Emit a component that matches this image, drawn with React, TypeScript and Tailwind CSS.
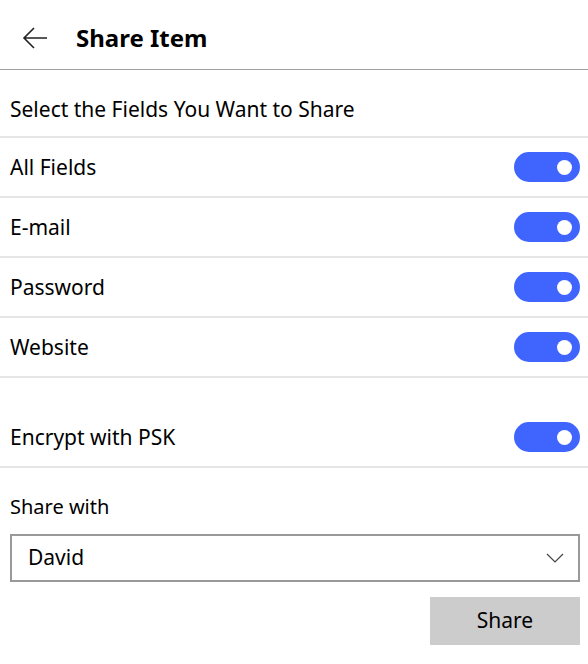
import { useState } from "react"

const fieldNames = ["All Fields", "E-mail", "Password", "Website"]

function Toggle({ on, onChange }: { on: boolean; onChange: () => void }) {
  return (
    <button
      onClick={onChange}
      className={`relative w-[66px] h-[30px] rounded-full ${on ? "bg-[#4065ff]" : "bg-gray-300"}`}
    >
      <span
        className={`absolute top-[7.5px] w-[15px] h-[15px] rounded-full bg-white ${on ? "right-[8px]" : "left-[8px]"}`}
      />
    </button>
  )
}

function Row({ label, on, onChange }: { label: string; on: boolean; onChange: () => void }) {
  return (
    <div className="flex items-center justify-between h-[60px] pl-[10px] pr-[8px] border-b-2 border-[#e6e6e6]">
      <span className="text-[21px] mt-[2px]">{label}</span>
      <Toggle on={on} onChange={onChange} />
    </div>
  )
}

export default function App() {
  const [fields, setFields] = useState([true, true, true, true])
  const [encrypt, setEncrypt] = useState(true)

  return (
    <div className="w-[588px] h-[664px] bg-white text-black font-['Noto_Sans',sans-serif]">
      {/* header */}
      <div className="flex items-center h-[70px] pt-[6px] border-b border-[#a0a0a0]">
        <svg width="28" height="28" viewBox="0 0 28 28" className="ml-[21px]">
          <path d="M26 14H3M13 4L3 14l10 10" fill="none" stroke="#222" strokeWidth="1.6" />
        </svg>
        <h1 className="ml-[27px] text-[24px] font-bold">Share Item</h1>
      </div>

      <div className="flex items-center h-[68px] pt-[13px] pl-[10px] border-b-2 border-[#e6e6e6]">
        <span className="text-[21px]">Select the Fields You Want to Share</span>
      </div>

      {fieldNames.map((name, i) => (
        <Row
          key={name}
          label={name}
          on={fields[i]}
          onChange={() => setFields(fields.map((f, j) => (j === i ? !f : f)))}
        />
      ))}

      <div className="pt-[30px]">
        <Row label="Encrypt with PSK" on={encrypt} onChange={() => setEncrypt(!encrypt)} />
      </div>

      <div className="pl-[10px] pr-[8px]">
        <div className="mt-[24px] text-[20px]">Share with</div>
        <div className="mt-[12px] flex items-center justify-between h-[48px] border-2 border-[#999] pl-[16px] pr-[14px]">
          <span className="text-[21px]">David</span>
          <svg width="18" height="10" viewBox="0 0 18 10">
            <path d="M1 1l8 8 8-8" fill="none" stroke="#444" strokeWidth="1.2" />
          </svg>
        </div>
        <div className="flex justify-end mt-[15px]">
          <button className="w-[150px] h-[48px] bg-[#cccccc] text-[21px]">Share</button>
        </div>
      </div>
    </div>
  )
}
